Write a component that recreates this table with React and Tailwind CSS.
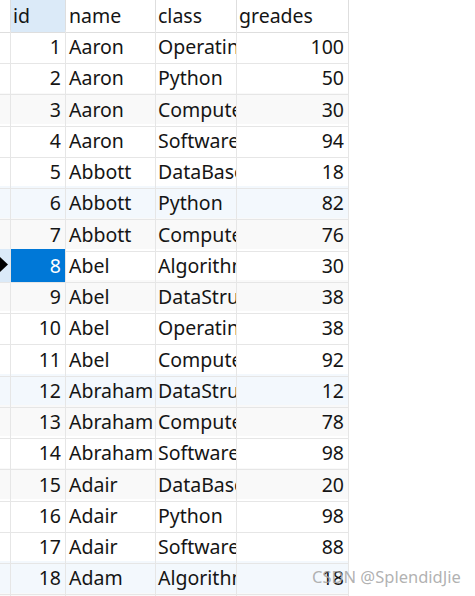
import React from "react";

const rows = [
  [1, "Aaron", "Operating System", 100],
  [2, "Aaron", "Python", 50],
  [3, "Aaron", "Computer Network", 30],
  [4, "Aaron", "Software Engineering", 94],
  [5, "Abbott", "DataBase", 18],
  [6, "Abbott", "Python", 82],
  [7, "Abbott", "Computer Network", 76],
  [8, "Abel", "Algorithm", 30],
  [9, "Abel", "DataStructure", 38],
  [10, "Abel", "Operating System", 38],
  [11, "Abel", "Computer Network", 92],
  [12, "Abraham", "DataStructure", 12],
  [13, "Abraham", "Computer Network", 78],
  [14, "Abraham", "Software Engineering", 98],
  [15, "Adair", "DataBase", 20],
  [16, "Adair", "Python", 98],
  [17, "Adair", "Software Engineering", 88],
  [18, "Adam", "Algorithm", 18],
  [19, "Adam", "Python", 60],
];

const font = { fontFamily: '"Noto Sans", "Noto Sans CJK SC", sans-serif' };

export default function App() {
  return (
    <div className="relative w-[475px] h-[596px] overflow-hidden bg-white text-[19.5px] text-[#151515]" style={font}>
      <div className="w-[349px]">
        <div className="grid grid-cols-[11px_55px_90px_81px_112px] h-[30px] leading-[32px]">
          <div className="border-r border-b border-[#dedede] bg-white" />
          <div className="border-r border-b border-[#dedede] bg-[#dbeaf8] pl-[2px]">id</div>
          <div className="border-r border-b border-[#dedede] pl-[3px]">name</div>
          <div className="border-r border-b border-[#dedede] pl-[2px]">class</div>
          <div className="border-r border-b border-[#dedede] pl-[2px]">greades</div>
        </div>
        {rows.map(([id, name, cls, g]) => {
          const sel = id === 8;
          const tint = id % 6 === 0 ? "bg-[#f3f8fd]" : id % 2 === 1 && id !== 1 && id !== 5 && id !== 11 && id !== 17 ? "bg-[#f9f9f9]" : "bg-white";
          return (
            <div
              key={id}
              className={`grid grid-cols-[11px_55px_90px_81px_112px] h-[31.25px] leading-[33px] ${sel ? "bg-white" : tint}`}
            >
              <div className={`relative border-r border-b border-[#e6e6e6] ${sel ? "bg-[#dbeaf8]" : ""}`}>
                {sel && (
                  <svg className="absolute left-0 top-[8px]" width="9" height="15" viewBox="0 0 9 15">
                    <path d="M0 0 L8 7.5 L0 15 Z" fill="#000" />
                  </svg>
                )}
              </div>
              <div className={`border-r border-b border-[#e6e6e6] text-right pr-[4px] ${sel ? "bg-[#0078d7] text-white" : ""}`}>{id}</div>
              <div className="border-r border-b border-[#e6e6e6] pl-[3px] overflow-hidden whitespace-nowrap">{name}</div>
              <div className="border-r border-b border-[#e6e6e6] pl-[2px] overflow-hidden whitespace-nowrap">{cls}</div>
              <div className="border-r border-b border-[#e6e6e6] text-right pr-[4px]">{g}</div>
            </div>
          );
        })}
      </div>
      <div className="absolute left-[312px] top-[565px] text-[16.5px] text-[#a8a8a8]/90 whitespace-nowrap" style={{ fontFamily: '"Noto Sans", sans-serif' }}>
        CSDN @SplendidJie
      </div>
    </div>
  );
}
